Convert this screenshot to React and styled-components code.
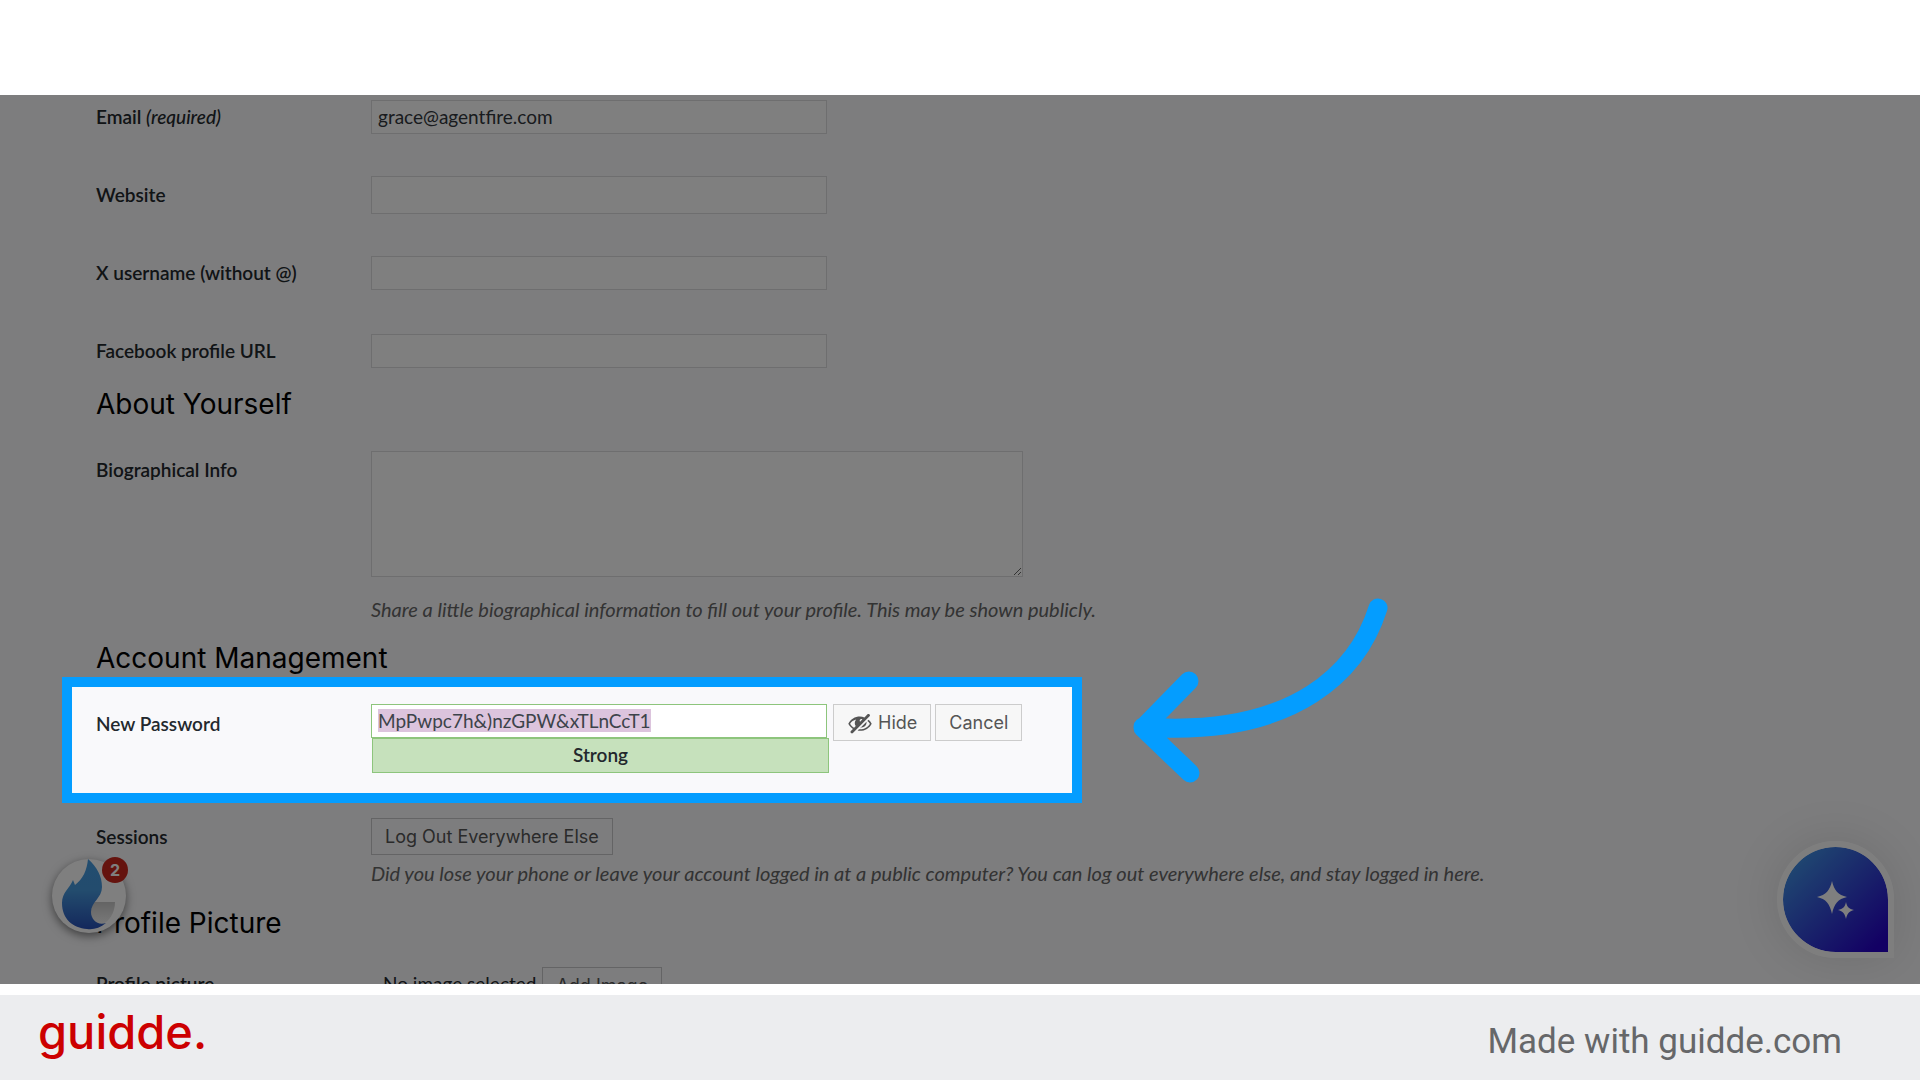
import React, { useEffect, useRef } from 'react';
import styled, { createGlobalStyle, css } from 'styled-components';

const BODY_FONT = "Lato, 'Noto Sans', sans-serif";
const HEADING_FONT = 'Inter, sans-serif';
const BLUE = '#049dff';

const GlobalStyle = createGlobalStyle`
  * {
    box-sizing: border-box;
  }
  body {
    margin: 0;
    background: #fff;
  }
`;

const Page = styled.div`
  display: flex;
  flex-direction: column;
  height: 100vh;
  padding-top: 95px;
`;

const Stage = styled.main`
  position: relative;
  flex: 1;
  min-height: 0;
  overflow: hidden;
  padding: 5px 96px 0;
  background: #fafafc;
  color: #23282d;
  font-family: ${BODY_FONT};
  font-size: 19px;
  line-height: 28px;
`;

const FieldList = styled.div`
  display: grid;
  gap: 44px;
`;

const rowColumns = css`
  display: grid;
  grid-template-columns: 275px auto;
`;

const FieldRow = styled.div`
  ${rowColumns}
  grid-template-rows: 34px;
  align-items: center;
`;

const Row = styled.div`
  ${rowColumns}
`;

const Label = styled.label`
  font-weight: 600;
  padding-top: ${props => props.$top || 0}px;

  em {
    font-weight: 500;
  }
`;

const Input = styled.input`
  width: 456px;
  height: ${props => (props.$tall ? 38 : 34)}px;
  padding: 0 6px 2px;
  border: 1px solid #dcdcde;
  background: #fff;
  color: #32373c;
  font: inherit;
`;

const PasswordInput = styled(Input)`
  display: block;
  border: 1px solid #8dc57c;
  outline: none;

  &::selection {
    background: #dcc4dd;
    color: #3c434a;
  }
`;

const TextArea = styled.textarea`
  display: block;
  width: 652px;
  height: 126px;
  border: 1px solid #dcdcde;
  background: #fff;
  font: inherit;
`;

const Title = styled.h2`
  margin: ${props => props.$margin};
  color: #000;
  font-family: ${HEADING_FONT};
  font-size: 28px;
  font-weight: 400;
  line-height: 32px;
`;

const Description = styled.p`
  margin: ${props => props.$top}px 0 0;
  color: #666;
  font-size: 20px;
  font-style: italic;
`;

const Button = styled.button`
  display: inline-flex;
  align-items: center;
  gap: 5px;
  height: 37px;
  padding: 0 13px;
  border: 1px solid #ccc;
  background: #f7f7f7;
  color: #555;
  font-family: ${HEADING_FONT};
  font-size: 18px;
`;

const DimButton = styled(Button)`
  border-color: #c8c8ca;
  background: #fafafc;
`;

const SessionButton = styled(DimButton)`
  margin-top: 15px;
`;

/* the huge spread dims everything around the highlighted row */
const Highlight = styled.section`
  ${rowColumns}
  position: relative;
  z-index: 2;
  width: max-content;
  height: 126px;
  margin-left: -34px;
  padding: 17px 50px 0 24px;
  border: 10px solid ${BLUE};
  background: #f9f9fb;
  box-shadow: 0 0 0 4000px rgba(0, 0, 0, 0.5);
`;

const PasswordTools = styled.div`
  display: flex;
  align-items: flex-start;
  gap: 4px;
`;

const Strength = styled.div`
  width: 457px;
  height: 35px;
  margin-left: 1px;
  border: 1px solid #8dc57c;
  background: #c6e1bc;
  font-weight: 600;
  line-height: 32px;
  text-align: center;
`;

const Arrow = styled.svg`
  position: absolute;
  top: -98px;
  left: calc(100% + 42px);
  width: 280px;
  height: 200px;
`;

const ImageLine = styled.div`
  display: flex;
  align-items: center;
  gap: 6px;
  padding-left: 12px;

  span {
    padding-bottom: 4px;
  }
`;

const FlameBadge = styled.button`
  position: absolute;
  left: 52px;
  bottom: 51px;
  width: 74px;
  height: 74px;
  padding: 0;
  border: 0;
  border-radius: 50%;
  background: #fff;
  box-shadow: 0 3px 10px rgba(0, 0, 0, 0.5);
`;

const FlameIcon = styled.svg`
  display: block;
  width: 74px;
  height: 74px;
`;

const Count = styled.span`
  position: absolute;
  top: -2px;
  right: -2px;
  width: 26px;
  height: 26px;
  border-radius: 50%;
  background: #ca271d;
  color: #fff;
  font: 700 16px/26px Inter, sans-serif;
  text-align: center;
`;

const ChatBubble = styled.button`
  position: absolute;
  right: 26px;
  bottom: 26px;
  display: grid;
  place-items: center;
  width: 117px;
  height: 117px;
  padding: 0;
  border: 6px solid #fdfdfd;
  border-radius: 50% 50% 0 50%;
  background: linear-gradient(135deg, #429fe6 8%, #2600c8 88%) border-box;
  background-clip: padding-box;
  box-shadow: 0 0 50px rgba(0, 0, 0, 0.12);
`;

const Footer = styled.footer`
  display: flex;
  align-items: center;
  justify-content: space-between;
  height: 85px;
  margin-top: 11px;
  padding: 0 78px 0 38px;
  background: #ecedef;
`;

const Wordmark = styled.a`
  padding-bottom: 12px;
  color: #c00;
  font: 500 47px/56px Inter, sans-serif;
  text-decoration: none;
`;

const Credit = styled.span`
  padding-top: 8px;
  color: #666769;
  font: 400 35px/40px Roboto, sans-serif;
`;

const fields = [
  { id: 'email', label: 'Email', note: '(required)', value: 'grace@agentfire.com' },
  { id: 'website', label: 'Website', tall: true },
  { id: 'x-username', label: 'X username (without @)' },
  { id: 'facebook', label: 'Facebook profile URL' },
];

const HiddenIcon = () => (
  <svg width="26" height="26" viewBox="0 0 20 20" fill="currentColor" aria-hidden="true">
    <path d="M17.2 3.3l.16.17c.39.39.39 1.02 0 1.41L4.55 17.7c-.39.39-1.03.39-1.41 0l-.17-.17c-.39-.39-.39-1.02 0-1.41l1.59-1.6c-1.57-1-2.76-2.3-3.56-3.93.81-1.65 2.03-2.98 3.64-3.99S8.04 5.09 10 5.09c1.2 0 2.33.21 3.4.6l2.38-2.39c.39-.39 1.03-.39 1.42 0zm-7.09 4.01c-.23.25-.34.54-.34.88 0 .31.12.58.31.81l1.8-1.79c-.13-.12-.28-.21-.45-.26-.11-.01-.28-.03-.49-.04-.33.03-.6.16-.83.4zM2.4 10.59c.69 1.23 1.71 2.25 3.05 3.05l1.28-1.28c-.51-.69-.77-1.47-.77-2.36 0-1.06.36-1.98 1.09-2.76-1.04.27-1.96.7-2.76 1.26-.8.58-1.43 1.27-1.89 2.09zm13.22-2.13l.96-1.02c1.02.86 1.83 1.89 2.42 3.09-.81 1.65-2.03 2.98-3.64 3.99s-3.4 1.51-5.36 1.51c-.63 0-1.24-.07-1.83-.18l1.07-1.07c.25.02.5.05.76.05 1.63 0 3.13-.4 4.5-1.21s2.4-1.84 3.1-3.08c-.46-.82-1.09-1.51-1.89-2.09-.03 0-.06 0-.09.01zm-5.58 5.58l4.97-4.97c.01.16.03.31.03.48 0 .7-.18 1.35-.52 1.94s-.82 1.07-1.41 1.41-1.24.52-1.94.52c-.4 0-.8.6-1.13.62z" />
  </svg>
);

const App = () => {
  const passwordRef = useRef(null);

  useEffect(() => {
    passwordRef.current.focus({ preventScroll: true });
    passwordRef.current.select();
  }, []);

  return (
    <Page>
      <GlobalStyle />
      <Stage>
        <FieldList>
          {fields.map(({ id, label, note, value, tall }) => (
            <FieldRow key={id}>
              <Label htmlFor={id}>
                {label} {note && <em>{note}</em>}
              </Label>
              <Input id={id} type="text" defaultValue={value} $tall={tall} />
            </FieldRow>
          ))}
        </FieldList>

        <Title $margin="20px 0 31px">About Yourself</Title>
        <Row>
          <Label htmlFor="bio" $top={5}>
            Biographical Info
          </Label>
          <div>
            <TextArea id="bio" />
            <Description $top={18}>
              Share a little biographical information to fill out your profile. This may be shown
              publicly.
            </Description>
          </div>
        </Row>

        <Title $margin="19px 0 3px">Account Management</Title>
        <Highlight>
          <Label htmlFor="password" $top={6}>
            New Password
          </Label>
          <PasswordTools>
            <div>
              <PasswordInput
                id="password"
                type="text"
                ref={passwordRef}
                defaultValue="MpPwpc7h&)nzGPW&xTLnCcT1"
              />
              <Strength>Strong</Strength>
            </div>
            <Button type="button">
              <HiddenIcon />
              Hide
            </Button>
            <Button type="button">Cancel</Button>
          </PasswordTools>
          <Arrow viewBox="1115 589 280 200" fill="none" stroke={BLUE} strokeWidth="19">
            <path
              d="M1379 608C1360 668 1300 738 1144 727M1190 681L1144 728L1191 773"
              strokeLinecap="round"
              strokeLinejoin="round"
            />
          </Arrow>
        </Highlight>

        <Row>
          <Label as="span" $top={20}>
            Sessions
          </Label>
          <div>
            <SessionButton type="button">Log Out Everywhere Else</SessionButton>
            <Description $top={4}>
              Did you lose your phone or leave your account logged in at a public computer? You can
              log out everywhere else, and stay logged in here.
            </Description>
          </div>
        </Row>

        <Title $margin="20px 0 28px">Profile Picture</Title>
        <Row>
          <Label as="span" $top={3}>
            Profile picture
          </Label>
          <ImageLine>
            <span>No image selected</span>
            <DimButton type="button">Add Image</DimButton>
          </ImageLine>
        </Row>

        <FlameBadge type="button" aria-label="Notifications">
          <FlameIcon viewBox="0 0 74 74">
            <defs>
              <linearGradient id="flame" x1="0" y1="0" x2="0" y2="1">
                <stop offset="0" stopColor="#459be0" />
                <stop offset="0.45" stopColor="#4698dc" />
                <stop offset="1" stopColor="#2850b8" />
              </linearGradient>
              <linearGradient id="ash" x1="0" y1="0" x2="0" y2="1">
                <stop offset="0" stopColor="#c8c8c8" />
                <stop offset="1" stopColor="#f4f4f4" />
              </linearGradient>
            </defs>
            <path d="M38 43H63C63 54 57 63 49 66L36 60Z" fill="url(#ash)" />
            <path
              d="M36 0C45 8 50 17 50 28C50 39 39 43 39 53C39 61 46 67 54 64C48 69 41 71 35 70C21 69 10 60 10 44C10 33 18 29 21 21L23 26C31 20 35 11 36 0Z"
              fill="url(#flame)"
            />
          </FlameIcon>
          <Count>2</Count>
        </FlameBadge>

        <ChatBubble type="button" aria-label="Assistant">
          <svg width="40" height="40" viewBox="0 0 40 40" fill="#fff">
            <path d="M16 1C18 10 22 15 31 17C22 19 18 24 16 34C14 24 10 19 1 17C10 15 14 10 16 1Z" />
            <path d="M30 22C31 27 33 29 38 30C33 31 31 34 30 39C29 34 27 31 22 30C27 29 29 27 30 22Z" />
          </svg>
        </ChatBubble>
      </Stage>

      <Footer>
        <Wordmark href="#">guidde.</Wordmark>
        <Credit>Made with guidde.com</Credit>
      </Footer>
    </Page>
  );
};

export default App;
